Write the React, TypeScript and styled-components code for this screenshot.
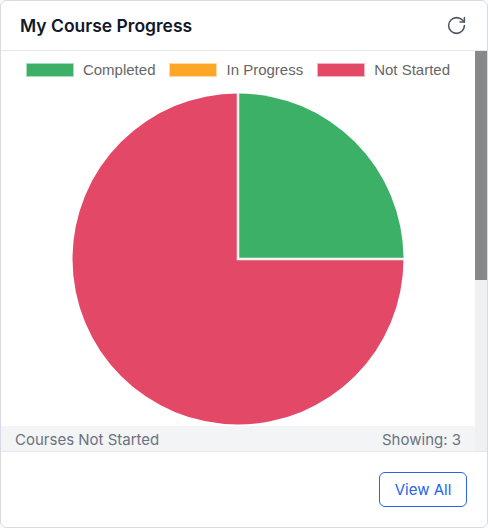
import { ReactElement } from "react";
import styled, { createGlobalStyle } from "styled-components";
import { RotateCw } from "lucide-react";

const legendItems = [
  { label: "Completed", color: "#3cb067", edge: "#a9dcbc" },
  { label: "In Progress", color: "#fda726", edge: "#fedba6" },
  { label: "Not Started", color: "#e34867", edge: "#f4b5c2" },
];

const App = (): ReactElement => {
  return (
    <>
      <GlobalStyle />
      <Card>
        <Header>
          <h2>My Course Progress</h2>
          <RefreshButton type="button" aria-label="Refresh">
            <RotateCw size={21} strokeWidth={1.75} color="#4b5563" />
          </RefreshButton>
        </Header>

        <Body>
          <Content>
            <ChartSection>
              <Legend>
                {legendItems.map((item) => (
                  <LegendItem key={item.label}>
                    <Swatch $color={item.color} $edge={item.edge} />
                    {item.label}
                  </LegendItem>
                ))}
              </Legend>
              <PieChart />
            </ChartSection>

            <ListHeader>
              <span>Courses Not Started</span>
              <span>Showing: 3</span>
            </ListHeader>
          </Content>
          <ScrollTrack>
            <ScrollThumb />
          </ScrollTrack>
        </Body>

        <Footer>
          <ViewAllButton type="button">View All</ViewAllButton>
        </Footer>
      </Card>
    </>
  );
};

const PieChart = (): ReactElement => (
  <PieSvg viewBox="0 0 334 334" aria-hidden="true">
    <path d="M167 167 L167 1.5 A165.5 165.5 0 1 0 332.5 167 Z" fill="#e34867" />
    <path d="M167 167 L332.5 167 A165.5 165.5 0 0 0 167 1.5 Z" fill="#3cb067" />
    <path d="M167 1 L167 167 L333 167" fill="none" stroke="#f5f5f5" strokeWidth="2.5" />
  </PieSvg>
);

const GlobalStyle = createGlobalStyle`
  html, body {
    margin: 0;
    padding: 0;
    background: #ffffff;
  }

  body {
    font-family: Inter, "Liberation Sans", sans-serif;
  }
`;

const Card = styled.div`
  box-sizing: border-box;
  display: flex;
  flex-direction: column;
  width: 488px;
  height: 528px;
  background: #ffffff;
  border: 1px solid #d8dbe1;
  border-radius: 6px;
  overflow: hidden;
`;

const Header = styled.header`
  box-sizing: border-box;
  display: flex;
  align-items: center;
  justify-content: space-between;
  flex: none;
  height: 50px;
  padding: 0 20px 0 19px;
  border-bottom: 1px solid #e5e7eb;

  > h2 {
    margin: 0;
    color: #111827;
    font-size: 17.5px;
    font-weight: 600;
    line-height: 24px;
  }
`;

const RefreshButton = styled.button`
  display: flex;
  padding: 0;
  border: 0;
  background: none;
  cursor: pointer;
`;

const Body = styled.div`
  display: flex;
  flex: none;
  height: 400px;
`;

const Content = styled.div`
  flex: 1;
  min-width: 0;
`;

const ScrollTrack = styled.div`
  flex: none;
  width: 12px;
  background: #f1f1f1;
`;

const ScrollThumb = styled.div`
  height: 229px;
  background: #888888;
`;

const ChartSection = styled.section`
  box-sizing: border-box;
  display: flex;
  flex-direction: column;
  align-items: center;
  height: 375px;
`;

const Legend = styled.div`
  box-sizing: border-box;
  display: flex;
  justify-content: center;
  gap: 14px;
  height: 41px;
  padding-top: 10px;
  color: #666666;
  font-family: "Liberation Sans", Arial, sans-serif;
  font-size: 15px;
  line-height: 18px;
`;

const LegendItem = styled.div`
  display: flex;
  align-items: flex-start;
  gap: 9px;
`;

const Swatch = styled.span<{ $color: string; $edge: string }>`
  box-sizing: border-box;
  width: 48px;
  height: 14px;
  margin-top: 2px;
  background: ${(p) => p.$color};
  border: 1px solid ${(p) => p.$edge};
`;

const PieSvg = styled.svg`
  display: block;
  width: 334px;
  height: 334px;
`;

const ListHeader = styled.div`
  box-sizing: border-box;
  display: flex;
  justify-content: space-between;
  align-items: center;
  height: 25px;
  padding: 2px 14px 0;
  background: #f3f4f6;
  color: #6b7280;
  font-size: 15px;
  line-height: 20px;
`;

const Footer = styled.footer`
  box-sizing: border-box;
  display: flex;
  align-items: flex-start;
  justify-content: flex-end;
  flex: 1;
  padding: 20px 20px 0;
  border-top: 1px solid #e5e7eb;
`;

const ViewAllButton = styled.button`
  box-sizing: border-box;
  width: 88px;
  height: 35px;
  padding: 0;
  border: 1px solid #2563eb;
  border-radius: 6px;
  background: #ffffff;
  color: #2563eb;
  font-family: inherit;
  font-size: 15px;
  font-weight: 400;
  cursor: pointer;
`;

export default App;
